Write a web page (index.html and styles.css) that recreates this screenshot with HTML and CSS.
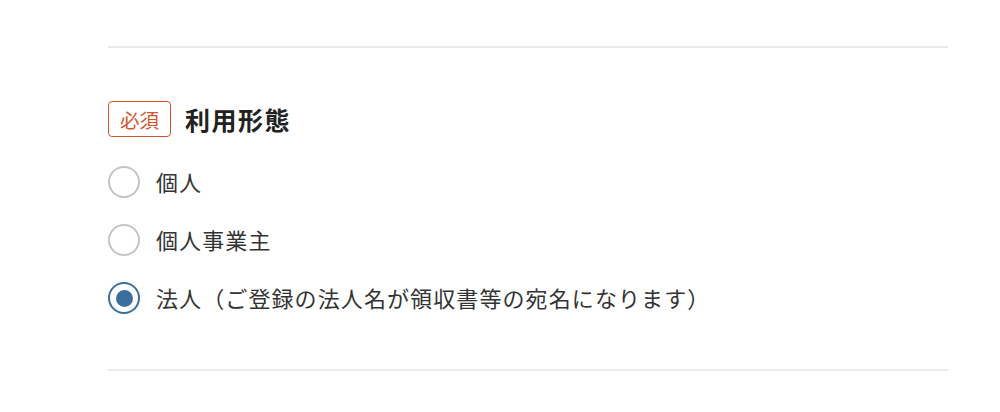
FILE: index.html
```html
<!DOCTYPE html>
<html lang="ja">
<head>
<meta charset="utf-8">
<link rel="stylesheet" href="styles.css">
</head>
<body>
<div class="page">
  <div class="divider"></div>
  <section class="field">
    <div class="field-head">
      <span class="badge">必須</span>
      <h2 class="field-title">利用形態</h2>
    </div>
    <div class="options">
      <label class="option"><span class="radio"></span><span class="option-label">個人</span></label>
      <label class="option"><span class="radio"></span><span class="option-label">個人事業主</span></label>
      <label class="option"><span class="radio checked"></span><span class="option-label">法人（ご登録の法人名が領収書等の宛名になります）</span></label>
    </div>
  </section>
  <div class="divider"></div>
</div>
</body>
</html>
```
FILE: styles.css
```css
html, body {
  margin: 0;
  padding: 0;
  background: #ffffff;
}
body {
  font-family: "Noto Sans CJK JP", "Noto Sans", sans-serif;
  color: #333333;
}
.page {
  width: 840px;
  padding: 46px 0 0 108px;
}
.divider {
  height: 2px;
  background: #ebebeb;
}
.field {
  padding: 53px 0 55px 0;
}
.field-head {
  display: flex;
  align-items: center;
  gap: 14px;
  height: 36px;
}
.badge {
  box-sizing: border-box;
  width: 63px;
  height: 36px;
  border: 1.5px solid #d4542c;
  border-radius: 4px;
  color: #d4542c;
  font-size: 19.5px;
  display: flex;
  align-items: center;
  justify-content: center;
}
.field-title {
  margin: 0;
  font-size: 25px;
  font-weight: 700;
  color: #222222;
  letter-spacing: 1.5px;
}
.options {
  display: flex;
  flex-direction: column;
  gap: 26px;
  margin-top: 29px;
}
.option {
  display: flex;
  align-items: center;
  gap: 16px;
  height: 32px;
}
.radio {
  box-sizing: border-box;
  width: 32px;
  height: 32px;
  border: 2px solid #c4c4c4;
  border-radius: 50%;
  display: flex;
  align-items: center;
  justify-content: center;
  flex: none;
}
.radio.checked {
  border-color: #3b6f9c;
}
.radio.checked::after {
  content: "";
  width: 17px;
  height: 17px;
  border-radius: 50%;
  background: #3b6f9c;
}
.option-label {
  font-size: 22px;
  line-height: 28px;
  letter-spacing: 1.1px;
  color: #333333;
  padding-bottom: 3px;
}
```
